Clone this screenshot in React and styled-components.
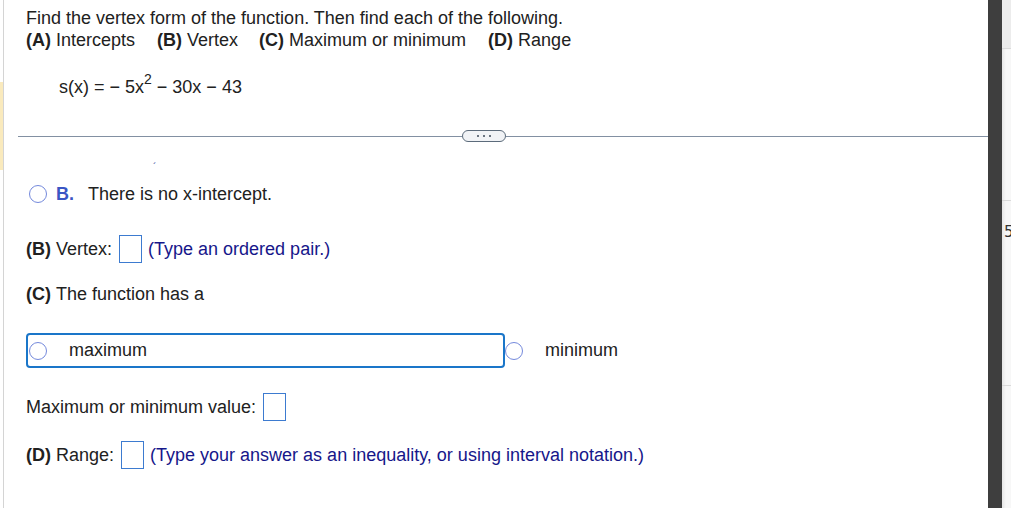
import React from "react";
import styled, { createGlobalStyle } from "styled-components";

const Global = createGlobalStyle`
  html, body {
    margin: 0;
    padding: 0;
    background: #ffffff;
    overflow: hidden;
  }
  body {
    font-family: "Liberation Sans", Arial, sans-serif;
    color: #212121;
  }
`;

const Page = styled.div`
  display: flex;
  width: 1011px;
  height: 508px;
  overflow: hidden;
`;

const LeftEdge = styled.div`
  width: 3px;
  border-right: 1px solid #d4d4d4;
  display: flex;
  flex-direction: column;
`;

const Marker = styled.div`
  margin-top: 82px;
  height: 88px;
  background: #faeabd;
`;

const Main = styled.div`
  flex: 1;
  display: flex;
  flex-direction: column;
  font-size: 18px;
`;

const Question = styled.div`
  padding: 7px 0 0 22px;
`;

const Line = styled.div`
  line-height: 22px;
  white-space: nowrap;
`;

const Part = styled.span`
  margin-right: ${(p) => p.$gap || 0}px;
`;

const Equation = styled.div`
  margin: 25px 0 0 33px;
  line-height: 22px;
  white-space: nowrap;
`;

const Sup = styled.sup`
  font-size: 14px;
  vertical-align: 9px;
  line-height: 0;
`;

const Divider = styled.div`
  display: flex;
  align-items: center;
  margin: 32px 0 0 14px;
  height: 12px;
`;

const Rule = styled.div`
  flex: ${(p) => (p.$w ? `0 0 ${p.$w}px` : 1)};
  height: 1px;
  background: #8290a2;
`;

const Pill = styled.div`
  width: 42px;
  height: 10px;
  border: 1px solid #5c6b7b;
  border-radius: 6px;
  background: #f1f3f6;
  display: flex;
  align-items: center;
  justify-content: center;
  gap: 4px;
`;

const Dot = styled.span`
  width: 2px;
  height: 2px;
  border-radius: 50%;
  background: #3d4a58;
`;

const Answers = styled.div`
  padding-left: 22px;
  display: flex;
  flex-direction: column;
`;

const Tick = styled.div`
  margin: 24px 0 0 127px;
  height: 4px;
  font-size: 10px;
  line-height: 4px;
  color: #2a3a9a;
`;

const Row = styled.div`
  display: flex;
  align-items: center;
  height: ${(p) => p.$h || 22}px;
  margin-top: ${(p) => p.$top || 0}px;
  white-space: nowrap;
`;

const Radio = styled.span`
  box-sizing: border-box;
  width: 18px;
  height: 18px;
  border-radius: 50%;
  border: 1.5px solid #7489dc;
  background: #fff;
  flex-shrink: 0;
  margin-left: ${(p) => p.$left || 0}px;
`;

const Letter = styled.b`
  color: #3a56c4;
  margin: 0 14px 0 9px;
`;

const Input = styled.span`
  box-sizing: border-box;
  display: inline-block;
  width: 23px;
  height: 28px;
  border: 1px solid #3d7bd0;
  margin: 0 6px 0 7px;
  flex-shrink: 0;
`;

const Hint = styled.span`
  color: #16168a;
`;

const Choice = styled.div`
  box-sizing: border-box;
  display: flex;
  align-items: center;
  width: 479px;
  height: 35px;
  border: 2px solid #1a76c9;
  border-radius: 4px;
  padding-left: 1px;
`;

const ChoiceText = styled.span`
  margin-left: ${(p) => p.$left}px;
`;

const Scrollbar = styled.div`
  width: 14px;
  background: #3e3e3e;
`;

const SidePanel = styled.div`
  width: 9px;
  display: flex;
  flex-direction: column;
  background: linear-gradient(to right, #e6e6e6, #f7f7f7 4px);
  font-family: "DejaVu Sans", sans-serif;
  font-size: 15px;
  color: #333;
  overflow: hidden;
`;

const SideBlock = styled.div`
  height: ${(p) => p.$h}px;
  border-bottom: 1px solid #dadada;
  background: ${(p) => p.$bg || "transparent"};
  padding: ${(p) => p.$pad || 0}px 0 0 2px;
  flex-shrink: 0;
`;

export default function App() {
  return (
    <Page>
      <Global />
      <LeftEdge>
        <Marker />
      </LeftEdge>
      <Main>
        <Question>
          <Line>Find the vertex form of the function. Then find each of the following.</Line>
          <Line>
            <Part $gap={22}><b>(A)</b> Intercepts</Part>
            <Part $gap={21}><b>(B)</b> Vertex</Part>
            <Part $gap={22}><b>(C)</b> Maximum or minimum</Part>
            <Part><b>(D)</b> Range</Part>
          </Line>
          <Equation>
            s(x) = − 5x<Sup>2</Sup> − 30x − 43
          </Equation>
        </Question>

        <Divider>
          <Rule $w={444} />
          <Pill>
            <Dot />
            <Dot />
            <Dot />
          </Pill>
          <Rule />
        </Divider>

        <Answers>
          <Tick>´</Tick>
          <Row $top={13}>
            <Radio $left={3} />
            <Letter>B.</Letter>
            There is no x-intercept.
          </Row>
          <Row $h={28} $top={30}>
            <b>(B)</b>&nbsp;Vertex:
            <Input />
            <Hint>(Type an ordered pair.)</Hint>
          </Row>
          <Row $top={20}>
            <b>(C)</b>&nbsp;The function has a
          </Row>
          <Row $h={35} $top={28}>
            <Choice>
              <Radio />
              <ChoiceText $left={22}>maximum</ChoiceText>
            </Choice>
            <Radio />
            <ChoiceText $left={22}>minimum</ChoiceText>
          </Row>
          <Row $h={28} $top={25}>
            Maximum or minimum value:
            <Input />
          </Row>
          <Row $h={28} $top={20}>
            <b>(D)</b>&nbsp;Range:
            <Input />
            <Hint>(Type your answer as an inequality, or using interval notation.)</Hint>
          </Row>
        </Answers>
      </Main>
      <Scrollbar />
      <SidePanel>
        <SideBlock $h={48} $bg="#ececec" />
        <SideBlock $h={151} />
        <SideBlock $h={162} $pad={22}>5</SideBlock>
      </SidePanel>
    </Page>
  );
}
